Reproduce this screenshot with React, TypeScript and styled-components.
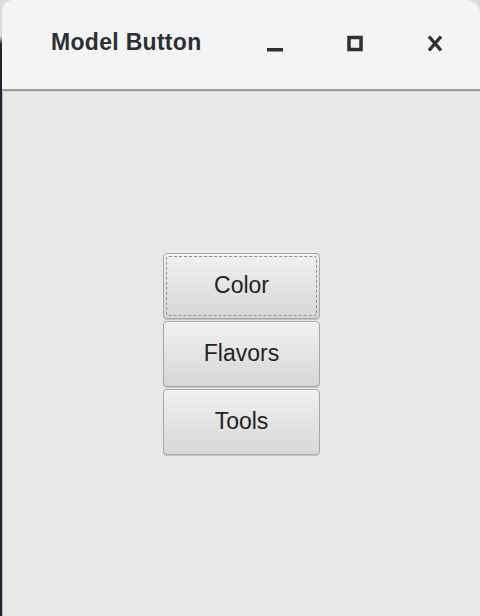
import * as React from "react"
import styled, { createGlobalStyle } from "styled-components"

const GlobalStyle = createGlobalStyle`
    html, body {
        margin: 0;
        padding: 0;
        height: 100%;
    }
    body {
        background: linear-gradient(to bottom, #dcdcdc 0, #dcdcdc 36px, #1c2731 44px, #1c2731 100%);
        font-family: "Liberation Sans", Arial, sans-serif;
    }
    #root {
        height: 100%;
    }
`

const App = () => {
    const [focused, setFocused] = React.useState("Color")
    const items = ["Color", "Flavors", "Tools"]

    return (
        <>
            <GlobalStyle />
            <Window>
                <TitleBar>
                    <Title>Model Button</Title>
                    <Controls>
                        <Control aria-label="Minimize">
                            <svg width="16" height="18" viewBox="0 0 16 18">
                                <rect x="0" y="13" width="16" height="3.5" fill="#2b3136" />
                            </svg>
                        </Control>
                        <Control aria-label="Maximize">
                            <svg width="16" height="18" viewBox="0 0 16 18">
                                <rect x="2" y="2.5" width="12" height="12" fill="none" stroke="#2b3136" strokeWidth="3.5" />
                            </svg>
                        </Control>
                        <Control aria-label="Close">
                            <svg width="16" height="18" viewBox="0 0 16 18">
                                <path d="M2 1.5 L14 15.5 M14 1.5 L2 15.5" stroke="#2b3136" strokeWidth="3.4" strokeLinecap="butt" />
                            </svg>
                        </Control>
                    </Controls>
                </TitleBar>
                <Body>
                    <ButtonStack>
                        {items.map((item) => (
                            <ModelButton
                                key={item}
                                $focused={focused === item}
                                onClick={() => setFocused(item)}
                            >
                                {item}
                            </ModelButton>
                        ))}
                    </ButtonStack>
                </Body>
            </Window>
        </>
    )
}
export default App

const Window = styled.div`
    margin-left: 2px;
    height: 100%;
    display: flex;
    flex-direction: column;
    background: #e8e8e6;
    border-radius: 10px 14px 0 0;
    overflow: hidden;
    box-shadow: inset 1px 0 0 #b8b8b8;
`

const TitleBar = styled.div`
    height: 91px;
    flex-shrink: 0;
    display: flex;
    align-items: center;
    justify-content: space-between;
    padding: 0 37px 0 49px;
    box-sizing: border-box;
    background: #f4f4f4;
    border-bottom: 2px solid #9d9e97;
    box-shadow: 0 1px 0 #d6d6d4;
`

const Title = styled.h1`
    margin: 0;
    padding-bottom: 4px;
    font-size: 23px;
    letter-spacing: 0.3px;
    font-weight: 700;
    color: #2b3036;
`

const Controls = styled.div`
    display: flex;
    align-items: center;
    gap: 64px;
    padding-bottom: 1px;
`

const Control = styled.button`
    width: 16px;
    height: 18px;
    padding: 0;
    border: none;
    background: none;
    display: flex;
    align-items: center;
    justify-content: center;
    cursor: pointer;
`

const Body = styled.div`
    flex: 1;
    display: flex;
    justify-content: center;
    padding-top: 162px;
    padding-left: 1px;
`

const ButtonStack = styled.div`
    display: flex;
    flex-direction: column;
    gap: 2px;
`

const ModelButton = styled.button<{ $focused?: boolean }>`
    position: relative;
    width: 157px;
    height: 66px;
    padding: 0 0 2px;
    border: 1px solid #a6a6a4;
    border-radius: 4px;
    background: linear-gradient(to bottom, #f0f0ef 0%, #e4e4e3 50%, #d7d7d6 100%);
    box-shadow: inset 0 1px 0 #fafafa, 0 1px 0 #c4c4c2;
    font-family: "Liberation Sans", Arial, sans-serif;
    font-size: 23px;
    color: #1f2327;
    cursor: pointer;
    outline: none;

    &::after {
        content: "";
        display: ${(p) => (p.$focused ? "block" : "none")};
        position: absolute;
        inset: 2px;
        border: 1px dashed #8e8e8c;
        border-radius: 3px;
        pointer-events: none;
    }
`
